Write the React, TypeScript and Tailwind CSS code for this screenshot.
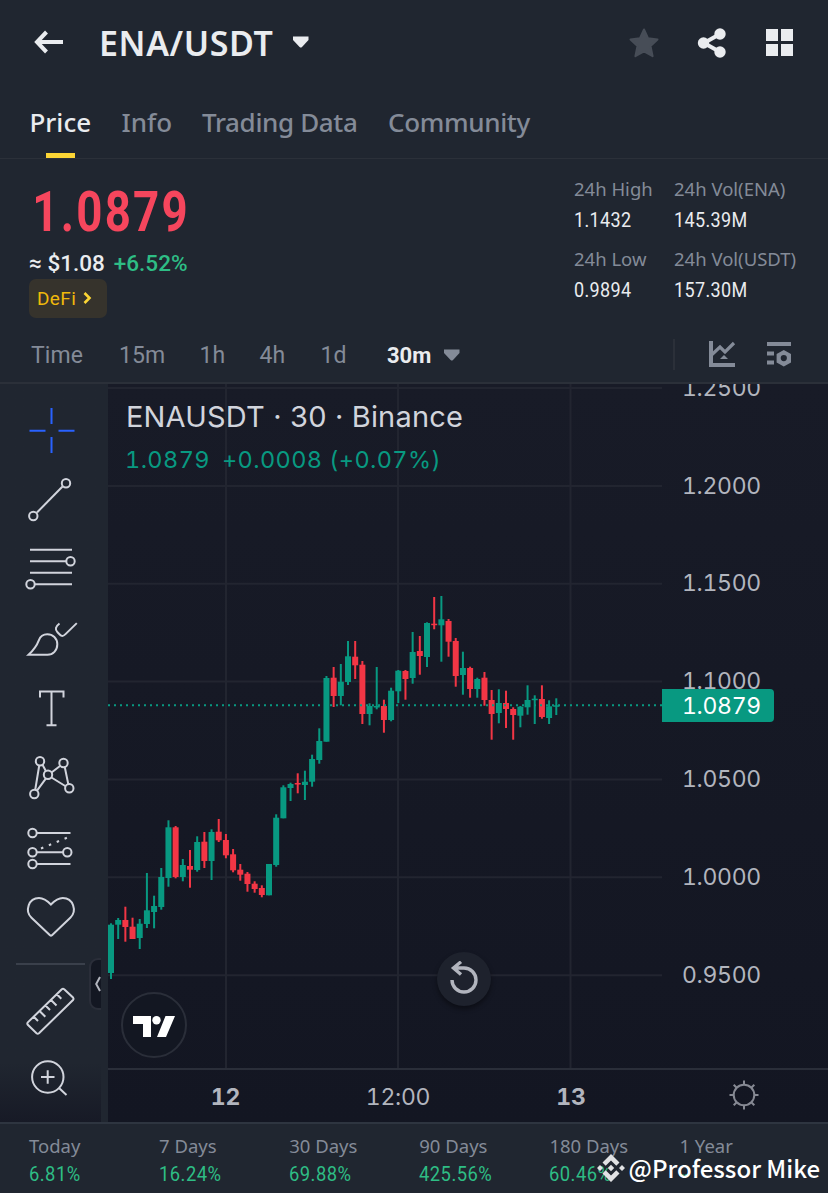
import type { ReactNode } from "react";

type Candle = [number, number, number, number, 0 | 1];

// [wick top, body top, body bottom, wick bottom, rising]
const candles: Candle[] = [
  [923.3, 924.7, 973, 979, 1], [918, 920, 924.7, 939, 1], [906.7, 920, 927, 941.7, 0],
  [917.7, 926.7, 939, 939, 0], [919, 923.7, 938, 949, 1], [873, 910.3, 924, 928, 1],
  [895.7, 906, 912, 928.3, 1], [868, 877, 907, 909.7, 1], [820.3, 827.3, 878, 886.7, 1],
  [826, 827.3, 877, 878.3, 0], [859, 865, 877, 881.3, 1], [850, 866, 869.7, 887.7, 0],
  [836.3, 842, 870, 871.7, 1], [832, 841.7, 861, 868, 0], [829.3, 832, 861, 880, 1],
  [819, 831.7, 840.3, 842, 0], [834, 840, 855.3, 858.3, 0], [849, 854.3, 870.3, 872.3, 0],
  [864, 869.7, 874.7, 880.7, 0], [872, 873.7, 884, 891.7, 0], [881.3, 883.7, 889, 892.7, 0],
  [885.3, 888, 895, 897.3, 0], [864, 864, 895.3, 895.3, 1], [814.3, 817.7, 865, 866.7, 1],
  [785.3, 787.3, 818.3, 818.3, 1], [782.7, 784, 788, 801, 1], [773.3, 783, 784, 793.3, 0],
  [770.7, 781.7, 785, 800, 1], [754.7, 759, 781.7, 786.7, 1], [728.3, 741, 760, 763.7, 1],
  [676, 678, 741.7, 741.7, 1], [667, 677.7, 696, 707, 0], [664, 681.7, 696, 705.3, 1],
  [641, 656.3, 682, 685, 1], [641, 656.7, 665.3, 679, 0], [661, 664.7, 714, 724, 0],
  [703.3, 706, 714, 725.3, 1], [667, 706, 707, 709.3, 1], [699.7, 706, 720, 732.7, 0],
  [687.7, 690.7, 720, 721.3, 1], [670, 670.7, 691.3, 703, 1], [670, 671, 679, 699.7, 0],
  [632, 652, 678, 683.7, 1], [636, 651, 656, 674.7, 0], [622.3, 623, 657, 667, 1],
  [597, 623.7, 625, 629.3, 0], [596, 619.3, 625.3, 661.7, 1], [619, 621, 641.7, 656.7, 0],
  [638, 641, 676, 686.7, 0], [651.7, 668, 675, 694.7, 1], [666.7, 668, 689, 697.7, 0],
  [677.7, 679, 689, 697.7, 1], [672, 677.7, 700, 705.7, 0], [690, 700, 714, 739.7, 0],
  [689.3, 703, 713, 723.3, 1], [690.7, 703, 709, 728, 0], [707.3, 709, 715, 739.7, 0],
  [706, 706.7, 715.7, 727.3, 1], [685.3, 700, 707.3, 714.7, 1], [695.3, 698.7, 700, 724, 1],
  [685.3, 699, 717, 718.7, 0], [700.3, 706.3, 718, 724, 1], [698.3, 705.3, 706.7, 715, 1],
];

const tabs = [
  { label: "Price", cls: "w-[92px] text-[#eaecef]" },
  { label: "Info", cls: "w-[80.5px] text-[#848b98]" },
  { label: "Trading Data", cls: "w-[186px] tracking-[-0.35px] text-[#848b98]" },
  { label: "Community", cls: "tracking-[-0.35px] text-[#848b98]" },
];

const intervals = [
  { label: "Time", cls: "w-[88px]" },
  { label: "15m", cls: "w-[80.5px]" },
  { label: "1h", cls: "w-[60px]" },
  { label: "4h", cls: "w-[61px]" },
  { label: "1d", cls: "w-[66.5px]" },
];

const priceScale = ["1.2500", "1.2000", "1.1500", "1.1000", "1.0500", "1.0000", "0.9500"];
const gridRows = [388, 486, 583.7, 681.5, 779.5, 877.3, 975.3];
const gridColumns = [226, 398, 570.5];

const performance = [
  ["Today", "6.81%"],
  ["7 Days", "16.24%"],
  ["30 Days", "69.88%"],
  ["90 Days", "425.56%"],
  ["180 Days", "60.46%"],
  ["1 Year", "--"],
];

function Header() {
  return (
    <header className="flex h-[88px] items-center pr-[34px] pb-[2px] pl-[34px]">
      <svg width="30" height="24" viewBox="0 0 30 24" fill="none" stroke="#eaecef" strokeWidth="4" className="-mt-0.5">
        <path d="M29 12H3M12.500 2 3 12l9.500 10" />
      </svg>
      <h1 className="ml-[35px] text-[34px] leading-none font-semibold tracking-[0.6px] whitespace-nowrap text-[#eaecef]">ENA/USDT</h1>
      <svg width="16" height="12" viewBox="0 0 16 12" fill="#eaecef" className="-mt-0.5 ml-[20px]">
        <path d="M0 .5h15.500v3.500L9 11q-1.200 1-2.400 0L0 4z" />
      </svg>
      <div className="-mt-px ml-auto flex items-center">
        <svg width="30" height="30" viewBox="0 0 30 30" fill="#474d57" stroke="#474d57" strokeWidth="2" strokeLinejoin="round">
          <path d="M15 1.500l4.100 8.800 9.400 1.100-7 6.500 2.100 10.300-8.600-4.800-8.600 4.800 2.100-10.300-7-6.500 9.400-1.100z" />
        </svg>
        <svg width="30" height="30" viewBox="0 0 30 30" fill="#eaecef" className="ml-[37.500px]">
          <path d="M23 6 7 15l16 9" fill="none" stroke="#eaecef" strokeWidth="4" />
          <circle cx="6.500" cy="15" r="5.700" /><circle cx="23" cy="6" r="5.700" /><circle cx="23" cy="24" r="5.700" />
        </svg>
        <svg width="27" height="27" viewBox="0 0 27 27" fill="#eaecef" className="mr-px ml-[39.500px]">
          <path d="M0 0h12v12H0zM15 0h12v12H15zM0 15h12v12H0zM15 15h12v12H15z" />
        </svg>
      </div>
    </header>
  );
}

function Tabs() {
  return (
    <nav className="flex h-[71px] border-b border-[#2b3039] pl-[30px] text-[26px] font-medium">
      {tabs.map((tab, i) => (
        <div key={tab.label} className={tab.cls + " flex flex-col whitespace-nowrap"}>
          <span className="-ml-[0.500px] h-[65px] leading-[68px]">{tab.label}</span>
          {i === 0 && <span className="ml-[16px] h-[5px] w-[29px] bg-[#fcd535]" />}
        </div>
      ))}
    </nav>
  );
}

function Stat({ label, value }: { label: string; value: string }) {
  return (
    <div className="h-[70px] whitespace-nowrap">
      <div className="h-[31px] text-[18.500px] leading-[29px] text-[#848b98]">{label}</div>
      <div className="h-[31px] font-[Roboto] text-[20px] leading-[31px] tracking-[0.4px] text-[#eaecef]">
        <span className="inline-block origin-left scale-x-[0.9]">{value}</span>
      </div>
    </div>
  );
}

function Quote() {
  return (
    <section className="flex h-[168px] justify-between pl-[29px]">
      <div className="w-[300px] pt-[21px]">
        <div className="h-[65px] origin-left scale-x-[0.83] pl-1 font-[Roboto] text-[55px] leading-[64px] font-bold tracking-[2.700px] text-[#f6465d]">1.0879</div>
        <div className="flex h-[34px] items-center gap-[9px] pt-1 font-[Roboto] text-[22.500px] font-medium whitespace-nowrap">
          <span className="text-[#eaecef]">≈ $1.08</span>
          <span className="text-[#2ebd85]">+6.52%</span>
        </div>
        <div className="flex h-[39px] w-[78px] items-center gap-2 rounded-[7px] bg-[#36332c] pt-px pl-2 font-[Roboto] text-[19px] text-[#f0b90b]">
          <span className="tracking-[0.4px]">DeFi</span>
          <svg width="9" height="12" viewBox="0 0 9 12" fill="none" stroke="#fcd535" strokeWidth="2.600" className="-ml-px -mt-0.5"><path d="m1.500 1 5 5-5 5" /></svg>
        </div>
      </div>
      <div className="flex w-[254px] pt-[15px]">
        <div className="w-[100px]"><Stat label="24h High" value="1.1432" /><Stat label="24h Low" value="0.9894" /></div>
        <div><Stat label="24h Vol(ENA)" value="145.39M" /><Stat label="24h Vol(USDT)" value="157.30M" /></div>
      </div>
    </section>
  );
}

function Intervals() {
  return (
    <section className="flex h-[57px] items-center border-b-2 border-[#2b3039] pl-[31px] font-[Roboto] text-[23px] text-[#848b98]">
      {intervals.map((item) => <span key={item.label} className={item.cls + " pt-[3px] tracking-[0.1px]"}>{item.label}</span>)}
      <span className="w-[57px] pt-px text-[22px] font-bold text-[#eaecef]">30m</span>
      <svg width="16" height="12" viewBox="0 0 16 12" fill="#848b98">
        <path d="M0 .5h15.500v3.500L9 11q-1.200 1-2.400 0L0 4z" />
      </svg>
      <div className="ml-auto flex items-center pr-[36px]">
        <span className="h-[31px] w-[2px] bg-[#2b3039]" />
        <svg width="28" height="28" viewBox="0 0 28 28" fill="none" stroke="#848b98" strokeWidth="4" className="-mt-px ml-[32.500px]">
          <path d="M3 1v24h24" /><path d="M4 14.500 12 7l5 5 9-9" strokeWidth="3.200" />
          <path d="m16 15 4 4h-8zM12.500 19.500h7" fill="#848b98" stroke="none" />
        </svg>
        <svg width="25" height="26" viewBox="0 0 25 26" fill="#848b98" className="-mt-px ml-[31.500px]">
          <path d="M0 1h24v4H0zM0 10.500h7v4H0zM0 19.500h7v4H0z" />
          <path fillRule="evenodd" d="m16.800 9 7.200 4v8.500l-7.200 4-7.200-4V13zM16.800 14a3.100 3.100 0 1 0 0 6.200 3.100 3.100 0 0 0 0-6.200z" />
        </svg>
      </div>
    </section>
  );
}

function Tool({ cls, children }: { cls: string; children: ReactNode }) {
  return (
    <div className={cls + " flex items-center justify-center"}>
      <svg width="56" height="56" viewBox="0 0 56 56" fill="none" stroke="#d1d4dc" strokeWidth="2">{children}</svg>
    </div>
  );
}

function Toolbar() {
  return (
    <aside className="relative h-[738px] w-[108px] shrink-0 bg-[#202630]">
      <div className="flex h-full w-[101px] flex-col bg-linear-to-b from-[#202630] from-[92%] to-[#171a26]">
        <Tool cls="mt-[13px] h-[68px]">
          <path d="M28.500 5v16M28.500 34v16M6.500 27.700h16M35.500 27.700h16" stroke="#2962ff" />
        </Tool>
        <Tool cls="-mt-px mr-px h-[69px]">
          <path d="M15 41.500 40.500 15.500" /><circle cx="11.300" cy="45" r="4.200" /><circle cx="44" cy="12.300" r="4.200" />
        </Tool>
        <Tool cls="h-[70px]">
          <path d="M7 9.700h42M7 21.200h36.500M7 32.700h42M12 44.300h37" /><circle cx="47.500" cy="21.200" r="4.200" /><circle cx="7.500" cy="44.300" r="4.200" />
        </Tool>
        <Tool cls="h-[70px]">
          <path d="M5.500 44.800h19c5.500 0 9.800-4.400 9.800-10.500s-4.500-10-10-10c-4.500 0-7.200 2.500-8.500 6-2.300 6.200-5 9.500-10.300 14.500z" />
          <path d="M36.500 13.500c-4 3-4.800 5.800-2 8.800 3.800 4.200 5 4.800 8 1.800l11.300-11" />
        </Tool>
        <Tool cls="h-[70px]">
          <path d="M17 17.500v-6h23.500v6M28.500 11.500v33.800M23.500 45.300h10" />
        </Tool>
        <Tool cls="mt-[2px] h-[70px]">
          <path d="m16.300 13-4.100 25M19.500 12.700l3.500 6.500M14 38.700l8.800-12M28.500 20.500l8.500-6.500M28.500 25.500l14.500 9M41.800 15.300l3.500 17" />
          <circle cx="17" cy="9.300" r="4.200" /><circle cx="40.500" cy="11" r="4.200" /><circle cx="25" cy="22.700" r="4.200" /><circle cx="11.300" cy="42" r="4.200" /><circle cx="46.300" cy="36.300" r="4.200" />
        </Tool>
        <Tool cls="h-[70px]">
          <path d="M14 11h33.500M14 30.300h26M14 42h33.500" /><path d="m18 26.500 29-12" strokeDasharray="2.500 6" />
          <circle cx="9.500" cy="11" r="4.200" /><circle cx="9.500" cy="30.300" r="4.200" /><circle cx="44.300" cy="30.300" r="4.200" /><circle cx="9.500" cy="42" r="4.200" />
        </Tool>
        <Tool cls="-mt-[2px] h-[68px]">
          <path d="M27 46.200 8.500 28.700C1.500 22 5.500 9 16 9c5 0 8 2.500 11.900 6.500C31.800 11.500 34.800 9 39.800 9c10.500 0 14.500 13 7.500 19.700L29 46.200q-1 .8-2 0z" />
        </Tool>
        <div className="mt-[12px] ml-[16px] h-[2px] w-[69px] bg-[#3a404b]" />
        <Tool cls="mt-[10px] mr-px h-[70px]">
          <path d="M39.800 7.300q1.200-1.200 2.400 0L51 15.500q1 1.300 0 2.500L17 51.300q-1.300 1-2.500 0L5.800 42.800q-1-1.200 0-2.400zM12 35l4 4M17.800 29.300l5.500 5.500M23.500 23.500l4.500 4.500M29 18l5.500 5.500M34.800 12.200l4.500 4.500" />
        </Tool>
        <Tool cls="-mt-[3px] h-[70px]">
          <circle cx="24.800" cy="28" r="15.700" /><path d="M18 28h13.500M24.700 21.300v13.500M36 39l7.500 7" />
        </Tool>
      </div>
      <div className="absolute top-[574px] left-[89px] flex h-[52px] w-[12px] items-center justify-end rounded-l-[9px] border-y-2 border-l-2 border-[#2a2e39] bg-[#131722]">
        <svg width="6" height="16" viewBox="0 0 6 16" fill="none" stroke="#b2b5be" strokeWidth="2"><path d="M5 1 1.200 8 5 15" /></svg>
      </div>
    </aside>
  );
}

function Plot() {
  return (
    <svg width="554" height="684" viewBox="108 384 554 684" className="block">
      <g stroke="#222530" strokeWidth="2">
        {gridRows.map((y) => <path key={y} d={`M108 ${y}H662`} />)}
        {gridColumns.map((x) => <path key={x} d={`M${x} 384V1068`} />)}
      </g>
      {candles.map(([high, top, bottom, low, up], i) => {
        const x = 111 + i * 7.182;
        const fill = up ? "#089981" : "#f23645";
        return (
          <g key={i} fill={fill}>
            <rect x={x - 1} y={high} width="2" height={low - high} />
            <rect x={x - 3} y={top} width="6" height={Math.max(bottom - top, 1.5)} />
          </g>
        );
      })}
      <path d="M108 705.200H662" stroke="#089981" strokeWidth="2" strokeDasharray="2 4" />
    </svg>
  );
}

function Chart() {
  return (
    <main className="flex h-[738px] font-[Inter]">
      <Toolbar />
      <div className="relative w-[720px] bg-linear-to-b from-[#181b27] to-[#131622]">
        <div className="flex h-[684px] overflow-hidden">
          <Plot />
          <div className="-mt-[45px] w-[166px] pl-[20px]">
            {priceScale.map((p) => (
              <div key={p} className="flex h-[97.900px] items-center text-[23px] tracking-[-0.3px] tabular-nums text-[#b2b5be]">{p}</div>
            ))}
          </div>
        </div>
        <div className="flex h-[54px] items-center border-t-2 border-[#2a2e39] pt-[2px] text-[23px] tabular-nums text-[#b2b5be]">
          <span className="w-[235px] text-center font-bold">12</span>
          <span className="w-[110px] text-center tracking-[-0.3px]">12:00</span>
          <span className="w-[236px] text-center font-bold">13</span>
          <svg width="30" height="30" viewBox="0 0 30 30" fill="none" stroke="#868993" strokeWidth="2" className="-mt-[4px] ml-[40px]">
            <circle cx="15" cy="15" r="10.300" />
            <path d="M15 .5v4M15 25.500v4M.5 15h4M25.500 15h4M4.700 4.700l3 3M22.300 22.300l3 3M25.300 4.700l-3 3M7.700 22.300l-3 3" />
          </svg>
        </div>
        <div className="absolute top-[15px] left-[18px] whitespace-nowrap">
          <div className="text-[29px] leading-[35px] tracking-[0.17px] text-[#d1d4dc]">ENAUSDT · 30 · Binance</div>
          <div className="mt-[9px] -ml-px flex gap-[12px] text-[23.500px] leading-[34px] tracking-[0.4px] tabular-nums text-[#089981]">
            <span>1.0879</span><span>+0.0008 (+0.07%)</span>
          </div>
        </div>
        <div className="absolute top-[305px] left-[554px] flex h-[33px] w-[112px] items-center rounded-r-[4px] bg-[#089981] pt-px pl-[20px] text-[23px] tracking-[-0.3px] tabular-nums text-white">1.0879</div>
        <div className="absolute top-[568px] left-[329px] flex size-[54px] items-center justify-center rounded-full bg-[#1e222d] shadow-[0_3px_5px_rgba(0,0,0,0.4)]">
          <svg width="30" height="36" viewBox="0 0 30 36" fill="none" stroke="#b2b5be" strokeWidth="3.400">
            <path d="M3 19a12 12 0 1 0 12-12H4M12 .8 4.500 7 12 13.500" />
          </svg>
        </div>
        <div className="absolute top-[608px] left-[13px] flex size-[66px] items-center justify-center rounded-full border-2 border-[#2a2e39] bg-[#131722] pt-[3px]">
          <svg width="42" height="22" viewBox="0 0 42 22" fill="#fff">
            <path d="M0 0h18v21H10V8H0zM32.500 0H42l-9 21h-9z" /><circle cx="23.500" cy="4.200" r="4.200" />
          </svg>
        </div>
      </div>
    </main>
  );
}

function Performance() {
  return (
    <footer className="flex h-[71px] border-t-2 border-[#2e3540] pl-[29px]">
      {performance.map(([label, value]) => (
        <div key={label} className="w-[130.100px] shrink-0 pt-[8px] whitespace-nowrap">
          <div className="text-[18.500px] leading-[27px] text-[#848b98]">{label}</div>
          <div className="origin-left scale-x-[0.92] pt-[2px] font-[Roboto] text-[20px] leading-[27px] tracking-[0.5px] text-[#2ebd85]">{value}</div>
        </div>
      ))}
    </footer>
  );
}

export default function App() {
  return (
    <div className="relative h-[1193px] w-[828px] overflow-hidden bg-[#202630] font-['Noto_Sans',sans-serif]">
      <Header />
      <Tabs />
      <Quote />
      <Intervals />
      <Chart />
      <Performance />
      <div className="absolute right-[8px] bottom-[10px] flex items-center gap-[4px] font-['Noto_Sans_CJK_SC',sans-serif] text-[24px] leading-[30px] font-medium whitespace-nowrap text-white">
        <svg width="28" height="28" viewBox="0 0 28 28" fill="#e1e2e4">
          <path d="m14 0 8.500 8.500-3.200 3.200L14 6.400l-5.300 5.300-3.200-3.200zM14 28l8.500-8.500-3.200-3.200-5.300 5.300-5.300-5.300-3.200 3.200zM14 10.800l3.200 3.200-3.200 3.200-3.200-3.200zM3 11l3 3-3 3-3-3zM25 11l3 3-3 3-3-3z" />
        </svg>
        <span>@Professor Mike</span>
      </div>
    </div>
  );
}
